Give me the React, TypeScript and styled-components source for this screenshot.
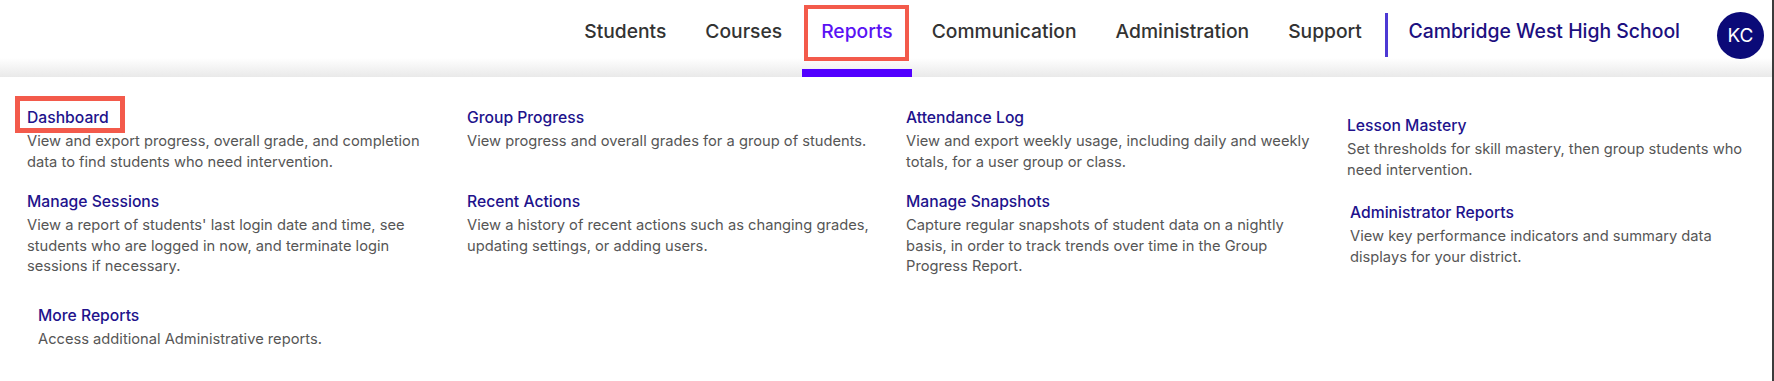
import styled, { createGlobalStyle } from 'styled-components';

const GlobalStyle = createGlobalStyle`
  html, body {
    margin: 0;
    padding: 0;
    background: #ffffff;
  }
  body {
    font-family: 'Inter', 'Noto Sans', sans-serif;
    -webkit-font-smoothing: antialiased;
  }
  *, *::before, *::after {
    box-sizing: border-box;
  }
`;

const Page = styled.div`
  width: 1774px;
  height: 381px;
  overflow: hidden;
  border-right: 2px solid #3c3c3c;
  background: #ffffff;
`;

const Header = styled.header`
  height: 77px;
  display: flex;
  justify-content: flex-end;
  align-items: flex-start;
  padding-right: 8px;
  background: linear-gradient(to bottom, #ffffff 0, #ffffff 58px, #e9e9e9 77px);
`;

const Nav = styled.nav`
  display: flex;
  height: 77px;
`;

interface NavItemProps {
  $active?: boolean;
  $marked?: boolean;
}

const NavItem = styled.a<NavItemProps>`
  position: relative;
  height: 77px;
  padding: 19px 19.5px 0;
  font-size: 19.25px;
  line-height: 24px;
  font-weight: 500;
  color: ${(p) => (p.$active ? '#5a12f4' : '#333333')};
  text-decoration: none;
  white-space: nowrap;

  &::after {
    content: '';
    display: ${(p) => (p.$active ? 'block' : 'none')};
    position: absolute;
    left: 0;
    right: 0;
    bottom: 0;
    height: 8px;
    background: #5200ff;
  }

  &::before {
    content: '';
    display: ${(p) => (p.$marked ? 'block' : 'none')};
    position: absolute;
    top: 5px;
    left: 2px;
    right: 3px;
    height: 56px;
    border: 4px solid #f35a4b;
  }
`;

const Divider = styled.div`
  width: 3px;
  height: 44px;
  margin: 13px 0 0 4px;
  background: #4d39d4;
`;

const School = styled.div`
  padding: 19px 0 0 20px;
  font-size: 19.4px;
  line-height: 24px;
  font-weight: 500;
  color: #1c0f80;
  white-space: nowrap;
`;

const Avatar = styled.div`
  width: 47px;
  height: 47px;
  margin: 12px 0 0 37px;
  border-radius: 50%;
  background: #0b0a78;
  color: #ffffff;
  font-size: 19px;
  display: flex;
  align-items: center;
  justify-content: center;
`;

const Panel = styled.section`
  display: grid;
  grid-template-columns: 440px 439px 441px 1fr;
  row-gap: 10px;
  align-items: start;
  padding: 29px 0 0 27px;
`;

interface ItemProps {
  $dx?: number;
  $dy?: number;
}

const Item = styled.div<ItemProps>`
  padding-left: ${(p) => p.$dx ?? 0}px;
  padding-top: ${(p) => p.$dy ?? 0}px;
`;

interface TitleProps {
  $marked?: boolean;
}

const Title = styled.a<TitleProps>`
  position: relative;
  display: inline-block;
  font-size: 15.7px;
  line-height: 24px;
  font-weight: 500;
  color: #21128c;
  text-decoration: none;

  &::before {
    content: '';
    display: ${(p) => (p.$marked ? 'block' : 'none')};
    position: absolute;
    top: -10px;
    left: -12px;
    width: 110px;
    height: 37px;
    border: 5px solid #f35a4b;
  }
`;

const Description = styled.p`
  margin: 1px 0 0;
  max-width: 412px;
  font-size: 14.7px;
  line-height: 20.5px;
  color: #565656;
`;

const navItems = ['Students', 'Courses', 'Reports', 'Communication', 'Administration', 'Support'];

const reports = [
  {
    title: 'Dashboard',
    text: 'View and export progress, overall grade, and completion data to find students who need intervention.',
    marked: true,
  },
  {
    title: 'Group Progress',
    text: 'View progress and overall grades for a group of students.',
  },
  {
    title: 'Attendance Log',
    text: 'View and export weekly usage, including daily and weekly totals, for a user group or class.',
  },
  {
    title: 'Lesson Mastery',
    text: 'Set thresholds for skill mastery, then group students who need intervention.',
    dy: 8,
  },
  {
    title: 'Manage Sessions',
    text: "View a report of students' last login date and time, see students who are logged in now, and terminate login sessions if necessary.",
  },
  {
    title: 'Recent Actions',
    text: 'View a history of recent actions such as changing grades, updating settings, or adding users.',
  },
  {
    title: 'Manage Snapshots',
    text: 'Capture regular snapshots of student data on a nightly basis, in order to track trends over time in the Group Progress Report.',
  },
  {
    title: 'Administrator Reports',
    text: 'View key performance indicators and summary data displays for your district.',
    dx: 3,
    dy: 11,
  },
  {
    title: 'More Reports',
    text: 'Access additional Administrative reports.',
    dx: 11,
    dy: 17,
  },
];

const App = () => {
  return (
    <Page>
      <GlobalStyle />
      <Header>
        <Nav>
          {navItems.map((label) => (
            <NavItem
              key={label}
              $active={label === 'Reports'}
              $marked={label === 'Reports'}
            >
              {label}
            </NavItem>
          ))}
        </Nav>
        <Divider />
        <School>Cambridge West High School</School>
        <Avatar>KC</Avatar>
      </Header>
      <Panel>
        {reports.map((r) => (
          <Item key={r.title} $dx={r.dx} $dy={r.dy}>
            <Title $marked={r.marked}>{r.title}</Title>
            <Description>{r.text}</Description>
          </Item>
        ))}
      </Panel>
    </Page>
  );
};

export default App;
